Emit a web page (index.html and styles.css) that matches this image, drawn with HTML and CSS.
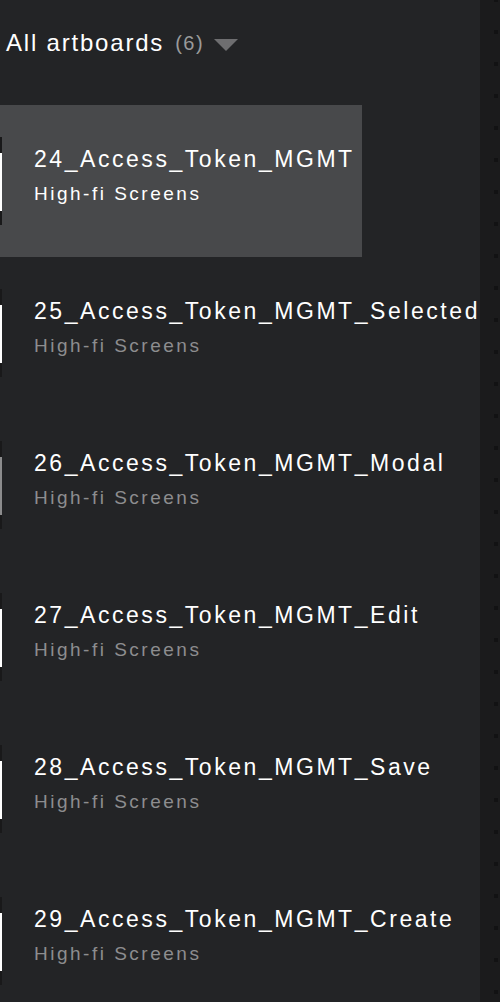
FILE: index.html
```html
<!DOCTYPE html>
<html lang="en">
<head>
<meta charset="utf-8">
<title>All artboards</title>
<link rel="stylesheet" href="styles.css">
</head>
<body>
<div class="panel">
  <div class="list">
    <div class="header">
      <span class="header-title">All artboards</span>
      <span class="header-count">(6)</span>
      <span class="caret"></span>
    </div>
    <div class="item selected">
      <div class="thumb"><div class="thumb-img"></div></div>
      <div class="text">
        <div class="title">24_Access_Token_MGMT</div>
        <div class="sub">High-fi Screens</div>
      </div>
    </div>
    <div class="item">
      <div class="thumb"><div class="thumb-img"></div></div>
      <div class="text">
        <div class="title">25_Access_Token_MGMT_Selected</div>
        <div class="sub">High-fi Screens</div>
      </div>
    </div>
    <div class="item">
      <div class="thumb"><div class="thumb-img gray"></div></div>
      <div class="text">
        <div class="title">26_Access_Token_MGMT_Modal</div>
        <div class="sub">High-fi Screens</div>
      </div>
    </div>
    <div class="item">
      <div class="thumb"><div class="thumb-img"></div></div>
      <div class="text">
        <div class="title">27_Access_Token_MGMT_Edit</div>
        <div class="sub">High-fi Screens</div>
      </div>
    </div>
    <div class="item">
      <div class="thumb"><div class="thumb-img"></div></div>
      <div class="text">
        <div class="title">28_Access_Token_MGMT_Save</div>
        <div class="sub">High-fi Screens</div>
      </div>
    </div>
    <div class="item">
      <div class="thumb"><div class="thumb-img"></div></div>
      <div class="text">
        <div class="title">29_Access_Token_MGMT_Create</div>
        <div class="sub">High-fi Screens</div>
      </div>
    </div>
  </div>
  <div class="strip"></div>
</div>
</body>
</html>
```
FILE: styles.css
```css
html, body {
  margin: 0;
  padding: 0;
  background: #232426;
  height: 100%;
  overflow: hidden;
}
body {
  font-family: "Liberation Sans", Arial, Helvetica, sans-serif;
  color: #ffffff;
}
.panel {
  display: flex;
  width: 500px;
  height: 1002px;
}
.list {
  flex: 1;
  display: flex;
  flex-direction: column;
  min-width: 0;
  white-space: nowrap;
}
.strip {
  width: 20px;
  flex: none;
  background-color: #1b1b1c;
  background-image: linear-gradient(to bottom, #121213 0 4px, transparent 4px 32px);
  background-size: 4px 32px;
  background-position: 14px 30px;
  background-repeat: repeat-y;
}
.header {
  flex: none;
  height: 86px;
  margin-bottom: 19px;
  display: flex;
  align-items: center;
  padding-left: 6px;
}
.header-title {
  font-size: 24px;
  letter-spacing: 1.8px;
  color: #ffffff;
}
.header-count {
  font-size: 20px;
  letter-spacing: 1.5px;
  color: #9a9a9a;
  margin-left: 11px;
}
.caret {
  width: 0;
  height: 0;
  border-left: 12px solid transparent;
  border-right: 12px solid transparent;
  border-top: 12px solid #6e6e70;
  margin-left: 10px;
  margin-top: 3px;
}
.item {
  display: flex;
  height: 152px;
  flex: none;
}
.item.selected {
  width: 362px;
  background: #48494b;
}
.thumb {
  width: 2px;
  height: 88px;
  margin-top: 32px;
  padding-top: 16px;
  box-sizing: border-box;
  background: #19191a;
  flex: none;
}
.thumb-img {
  height: 58px;
  background: #ffffff;
}
.thumb-img.gray {
  background: #8c8c8d;
}
.text {
  padding-left: 32px;
  padding-top: 41px;
}
.title {
  font-size: 23px;
  line-height: 26px;
  letter-spacing: 2.55px;
  color: #ffffff;
}
.sub {
  font-size: 19px;
  line-height: 26px;
  letter-spacing: 2.5px;
  color: #8d8d8f;
  margin-top: 9px;
}
.selected .sub {
  color: #ffffff;
}
```
